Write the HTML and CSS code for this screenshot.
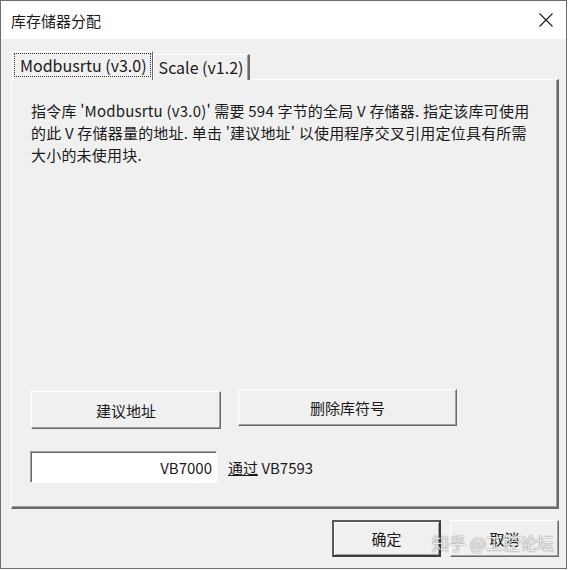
FILE: index.html
```html
<!DOCTYPE html>
<html lang="zh-CN">

<head>
	<meta charset="UTF-8">
	<title>库存储器分配</title>
	<link rel="stylesheet" href="styles.css">
</head>

<body>
	<div class="window">
		<div class="titlebar">
			<span class="title">库存储器分配</span>
			<svg class="close" width="16" height="16" viewBox="0 0 16 16">
				<path d="M1.5 1.5 L14.5 14.5 M14.5 1.5 L1.5 14.5" stroke="#1a1a1a" stroke-width="1.1" fill="none" />
			</svg>
		</div>

		<div class="client">
			<div class="tabs">
				<div class="tab active"><span class="focus">Modbusrtu (v3.0)</span></div>
				<div class="tab">Scale (v1.2)</div>
			</div>

			<div class="panel">
				<p class="desc">指令库 'Modbusrtu (v3.0)' 需要 594 字节的全局 V 存储器. 指定该库可使用的此 V 存储器量的地址. 单击 '建议地址' 以使用程序交叉引用定位具有所需大小的未使用块.</p>

				<div class="actions">
					<button class="btn btn-suggest">建议地址</button>
					<button class="btn btn-delete">删除库符号</button>
				</div>

				<div class="range">
					<input class="addr" type="text" value="VB7000">
					<span class="range-label"><u>通过</u> VB7593</span>
				</div>
			</div>

			<div class="footer">
				<button class="btn btn-ok">确定</button>
				<button class="btn btn-cancel">取消</button>
			</div>

			<!-- site watermark over the cancel button -->
			<div class="watermark">知乎 @工控论坛</div>
		</div>
	</div>
</body>

</html>
```

FILE: styles.css
```css
:root {
	--face: #f0f0f0;
	--shadow: #a0a0a0;
	--dark: #696969;
	--text: #1a1a1a;
}

body {
	margin: 0;
	padding: 0;
	background: #fff;
	font-family: "Noto Sans CJK SC", "Noto Sans", sans-serif;
	color: var(--text);
}

.window {
	position: relative;
	box-sizing: border-box;
	width: 567px;
	height: 569px;
	border: 1px solid #6e6e6e;
	display: flex;
	flex-direction: column;
	background: var(--face);
}

.titlebar {
	height: 38px;
	background: #fff;
	display: flex;
	align-items: center;
	justify-content: space-between;
	padding: 0 12px 0 10px;
}

.title {
	font-size: 15px;
}

.close {
	display: block;
}

.client {
	position: relative;
	flex: 1;
	display: flex;
	flex-direction: column;
}

/* tab strip */
.tabs {
	display: flex;
	align-items: flex-end;
	margin: 13px 0 -1px 11px;
	height: 28px;
	position: relative;
	z-index: 1;
}

.tab {
	box-sizing: border-box;
	height: 26px;
	padding: 0 5px 0 5px;
	font-size: 16px;
	line-height: 24px;
	background: var(--face);
	border-left: 1px solid #fff;
	border-top: 1px solid #fff;
	border-right: 2px solid var(--dark);
	box-shadow: inset -1px 0 var(--shadow);
}

.tab.active {
	height: 29px;
	padding: 2px 2px 0 2px;
	border-right: 1px solid var(--dark);
	box-shadow: none;
}

.focus {
	display: block;
	padding: 0 3px 0 5px;
	line-height: 22px;
	outline: 1px dotted #333;
	outline-offset: 0;
}

/* page of the tab */
.panel {
	box-sizing: border-box;
	margin-left: 10px;
	width: 548px;
	height: 430px;
	padding: 20px 20px 24px 19px;
	border-top: 1px solid #fff;
	border-left: 1px solid #fff;
	border-right: 2px solid var(--dark);
	border-bottom: 2px solid var(--dark);
	box-shadow: inset -1px -1px var(--shadow);
	display: flex;
	flex-direction: column;
}

.desc {
	margin: 0;
	font-size: 15px;
	line-height: 22px;
	letter-spacing: 0.2px;
}

.btn {
	box-sizing: border-box;
	font-family: inherit;
	font-size: 15px;
	color: var(--text);
	background: var(--face);
	border: 1px solid;
	border-color: #fff var(--dark) var(--dark) #fff;
	box-shadow: inset -1px -1px var(--shadow);
	padding: 0;
}

.actions {
	margin-top: auto;
	display: flex;
	align-items: flex-start;
	gap: 17px;
}

.btn-suggest {
	width: 190px;
	height: 38px;
}

.btn-delete {
	width: 219px;
	height: 37px;
	margin-top: -2px;
}

.range {
	margin-top: 22px;
	display: flex;
	align-items: center;
	gap: 11px;
}

.addr {
	box-sizing: border-box;
	width: 187px;
	height: 32px;
	margin: 0 0 0 -1px;
	padding: 0 4px;
	text-align: right;
	font-family: inherit;
	font-size: 15px;
	color: var(--text);
	background: #fff;
	border: 1px solid;
	border-color: var(--shadow) #fff #fff var(--shadow);
	box-shadow: inset 1px 1px var(--dark);
	outline: none;
}

.range-label {
	font-size: 15px;
}

.footer {
	display: flex;
	justify-content: flex-end;
	gap: 9px;
	margin: 11px 7px 0 0;
}

.btn-ok,
.btn-cancel {
	width: 109px;
	height: 37px;
}

.btn-ok {
	border: 2px solid;
	border-color: #5a5a5a #3c3c3c #3c3c3c #5a5a5a;
	box-shadow: inset 1px 1px #fff, inset -1px -1px var(--shadow);
}

.watermark {
	position: absolute;
	right: 12px;
	bottom: 13px;
	font-size: 17px;
	color: rgba(255, 255, 255, 0.88);
	text-shadow: 0 0 1px rgba(0, 0, 0, 0.5), 0 0 2px rgba(0, 0, 0, 0.25);
	pointer-events: none;
}
```
